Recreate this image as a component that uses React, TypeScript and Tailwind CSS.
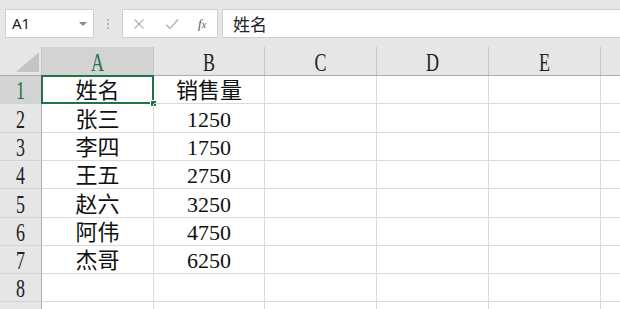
import React from "react";

const cols = ["A", "B", "C", "D", "E", ""];
const colWidths = [112, 111, 112, 112, 112, 40];
const rowHeights = [28, 29, 28, 28, 29, 28, 28, 28, 28];

const data: [string, string][] = [
  ["姓名", "销售量"],
  ["张三", "1250"],
  ["李四", "1750"],
  ["王五", "2750"],
  ["赵六", "3250"],
  ["阿伟", "4750"],
  ["杰哥", "6250"],
];

const cellFont = { fontFamily: '"Liberation Serif", "Noto Sans CJK SC", serif' };
const headFont = { fontFamily: '"Liberation Serif", serif' };
const uiFont = { fontFamily: '"Noto Sans", "Noto Sans CJK SC", sans-serif' };

function HeadLabel({ text, active }: { text: string; active?: boolean }) {
  return (
    <span
      className={`inline-block text-[18px] leading-none scale-y-[1.4] ${active ? "text-[#217346]" : "text-[#222]"}`}
      style={headFont}
    >
      {text}
    </span>
  );
}

export default function App() {
  return (
    <div className="w-[620px] h-[309px] overflow-hidden bg-white relative">
      {/* formula bar */}
      <div className="h-[47px] bg-[#e6e6e6] flex items-start pt-[9px] pl-[5px]" style={uiFont}>
        <div className="w-[89px] h-[29px] shrink-0 bg-white border border-[#d0d0d0] flex items-center pl-[6px] pr-[6px]">
          <span className="text-[15px] text-[#222] flex-1">A1</span>
          <span className="w-0 h-0 border-l-[4px] border-r-[4px] border-t-[4px] border-l-transparent border-r-transparent border-t-[#8a8a8a]" />
        </div>
        <div className="w-[28px] h-[29px] shrink-0 flex flex-col items-center justify-center gap-[2px]">
          <span className="w-[2px] h-[2px] bg-[#b5b5b5]" />
          <span className="w-[2px] h-[2px] bg-[#b5b5b5]" />
          <span className="w-[2px] h-[2px] bg-[#b5b5b5]" />
        </div>
        <div className="w-[96px] h-[29px] shrink-0 bg-white border border-[#d0d0d0] flex items-center">
          <svg width="12" height="12" viewBox="0 0 12 12" className="ml-[10px]">
            <path d="M1.5 1.5 L10.5 10.5 M10.5 1.5 L1.5 10.5" stroke="#b4b4b4" strokeWidth="1.3" fill="none" />
          </svg>
          <svg width="14" height="12" viewBox="0 0 14 12" className="ml-[20px]">
            <path d="M1 6.5 L5 10.5 L13 1.5" stroke="#b4b4b4" strokeWidth="1.4" fill="none" />
          </svg>
          <span
            className="ml-[19px] text-[13px] italic text-[#555]"
            style={{ fontFamily: '"Liberation Serif", serif' }}
          >
            f<span className="text-[10px]">x</span>
          </span>
        </div>
        <div className="flex-1 ml-[4px] h-[29px] bg-white border-t border-b border-l border-[#d0d0d0] flex items-center pl-[10px]">
          <span className="text-[17px] text-[#222]" style={{ fontFamily: '"Noto Sans CJK SC", sans-serif' }}>
            姓名
          </span>
        </div>
      </div>

      {/* header row */}
      <div className="flex h-[29px] bg-[#e6e6e6] border-b border-[#ababab]">
        <div className="w-[42px] shrink-0 relative border-r border-[#c6c6c6]">
          <div
            className="absolute right-[2px] bottom-[3px] w-[23px] h-[20px] bg-[#c4c4c4]"
            style={{ clipPath: "polygon(100% 0, 100% 100%, 0 100%)" }}
          />
        </div>
        {cols.map((c, i) => (
          <div
            key={i}
            className={`shrink-0 flex items-center justify-center border-r border-[#c6c6c6] pt-[4px] ${i === 0 ? "bg-[#d3d3d3]" : ""}`}
            style={{ width: colWidths[i] }}
          >
            {c && <HeadLabel text={c} active={i === 0} />}
          </div>
        ))}
      </div>

      {/* body */}
      {rowHeights.map((h, r) => (
        <div key={r} className="flex" style={{ height: h }}>
          <div
            className={`w-[42px] shrink-0 flex items-center justify-center border-r border-b border-r-[#ababab] border-b-[#d4d4d4] pt-[3px] ${r === 0 ? "bg-[#d3d3d3]" : "bg-[#e6e6e6]"}`}
          >
            {r < 8 && <HeadLabel text={String(r + 1)} active={r === 0} />}
          </div>
          {colWidths.map((w, c) => (
            <div
              key={c}
              className="shrink-0 relative flex items-center justify-center border-r border-b border-[#dadada] text-[22px] text-[#111] pt-[2px]"
              style={{ width: w, ...cellFont }}
            >
              {c < 2 && data[r] ? data[r][c] : ""}
              {r === 0 && c === 0 && (
                <>
                  <div className="absolute -left-px -top-px -right-px -bottom-px border-2 border-[#217346] pointer-events-none" />
                  <div className="absolute -right-[4px] -bottom-[4px] w-[7px] h-[7px] bg-[#217346] border border-white" />
                </>
              )}
            </div>
          ))}
        </div>
      ))}
    </div>
  );
}
